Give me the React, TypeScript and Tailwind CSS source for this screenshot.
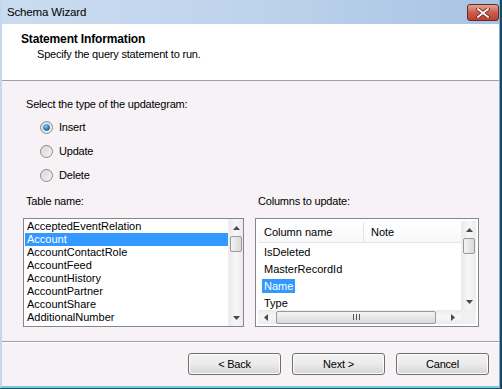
import React from "react";

const FONT = { fontFamily: '"Liberation Sans", Arial, sans-serif' };

function Arrow({ dir }: { dir: "up" | "down" | "left" | "right" }) {
  const pts =
    dir === "up"
      ? "0,4 7,4 3.5,0"
      : dir === "down"
      ? "0,0 7,0 3.5,4"
      : dir === "left"
      ? "4,0 4,7 0,3.5"
      : "0,0 0,7 4,3.5";
  const w = dir === "up" || dir === "down" ? 7 : 4;
  const h = dir === "up" || dir === "down" ? 4 : 7;
  return (
    <svg width={w} height={h} viewBox={`0 0 ${w} ${h}`}>
      <polygon points={pts} fill="#4a4a4a" />
    </svg>
  );
}

function VScroll() {
  return (
    <div className="w-[15px] h-full flex flex-col bg-gradient-to-r from-[#ebebeb] via-[#f7f7f7] to-[#ebebeb] border-l border-[#eeeeee]">
      <div className="h-[17px] flex items-center justify-center">
        <Arrow dir="up" />
      </div>
      <div className="h-[16px] mx-[1px] rounded-[2px] border border-[#9a9a9a] bg-gradient-to-r from-[#f4f4f4] to-[#d9d9d9]" />
      <div className="flex-1" />
      <div className="h-[17px] flex items-center justify-center">
        <Arrow dir="down" />
      </div>
    </div>
  );
}

function Radio({ checked }: { checked?: boolean }) {
  return (
    <svg width="13" height="13" viewBox="0 0 13 13">
      <defs>
        <linearGradient id={checked ? "rg1" : "rg0"} x1="0" y1="0" x2="1" y2="1">
          <stop offset="0" stopColor="#d2d2d2" />
          <stop offset="1" stopColor="#f8f8f8" />
        </linearGradient>
        <radialGradient id="dot" cx="0.4" cy="0.35" r="0.7">
          <stop offset="0" stopColor="#8fd3f5" />
          <stop offset="0.5" stopColor="#2f8fd0" />
          <stop offset="1" stopColor="#0b4f8f" />
        </radialGradient>
      </defs>
      <circle cx="6.5" cy="6.5" r="6" fill={`url(#${checked ? "rg1" : "rg0"})`} stroke="#8c8c8c" strokeWidth="1" />
      <circle cx="6.5" cy="6.5" r="4.3" fill="none" stroke="#e6e6e6" strokeWidth="0.8" />
      {checked && <circle cx="6.5" cy="6.5" r="3.3" fill="url(#dot)" />}
    </svg>
  );
}

function Btn({ children }: { children: React.ReactNode }) {
  return (
    <div className="w-[93px] h-[22px] rounded-[3px] border border-[#707070] bg-gradient-to-b from-[#f2f2f2] via-[#ebebeb] to-[#d6d6d6] flex items-center justify-center text-[11px] tracking-[-0.2px] text-black shadow-[inset_0_0_0_1px_#fcfcfc]">
      {children}
    </div>
  );
}

export default function App() {
  const tables = [
    "AcceptedEventRelation",
    "Account",
    "AccountContactRole",
    "AccountFeed",
    "AccountHistory",
    "AccountPartner",
    "AccountShare",
    "AdditionalNumber",
  ];
  const cols = ["IsDeleted", "MasterRecordId", "Name", "Type"];
  return (
    <div
      style={FONT}
      className="w-[502px] h-[389px] flex flex-col overflow-hidden border-r-2 border-r-[#1f4760] border-b border-b-[#2b5066] text-black"
    >
      <div className="flex-1 flex flex-col min-h-0 border-l-2 border-l-[#c3d8ee] border-r border-r-[#6fb2da] border-b-2 border-b-[#79c9e6]">
        {/* Title bar */}
        <div className="h-[24px] shrink-0 flex items-center pt-[2px] pl-[5px] pr-[1px] bg-gradient-to-r from-[#cadcf0] via-[#bed3ec] to-[#a9c3e4] relative">
          <span className="text-[11.5px] tracking-[-0.15px] text-black">Schema Wizard</span>
          <div className="absolute right-[0px] top-[4px] w-[32px] h-[17px] rounded-[3px] border border-[#6a2a22] bg-gradient-to-b from-[#e4a393] via-[#cc5d4b] to-[#b8402f] flex items-center justify-center">
            <svg width="14" height="10" viewBox="0 0 14 10">
              <path d="M2 1 L12 9 M12 1 L2 9" stroke="#5a1e16" strokeWidth="3.4" strokeLinecap="square" />
              <path d="M2 1 L12 9 M12 1 L2 9" stroke="#ffffff" strokeWidth="1.8" strokeLinecap="square" />
            </svg>
          </div>
        </div>

        {/* Header */}
        <div className="h-[57px] shrink-0 bg-white border-b border-[#a0a0a0] pt-[8px]">
          <div className="pl-[19px] text-[12px] leading-[14px] font-bold tracking-[-0.15px]">Statement Information</div>
          <div className="pl-[35px] mt-[2px] text-[11px] leading-[13px] tracking-[-0.2px]">
            Specify the query statement to run.
          </div>
        </div>

        {/* Body */}
        <div className="h-[261px] shrink-0 bg-[#f6f2f5] border-b border-[#a0a0a0] pl-[21px] pt-[17px] flex flex-col">
          <div className="pl-[3px] text-[11px] leading-[13px] tracking-[-0.2px]">Select the type of the updategram:</div>
          <div className="mt-[4px] pl-[17px] flex flex-col">
            {["Insert", "Update", "Delete"].map((l, i) => (
              <div key={l} className="h-[24px] flex items-center gap-[6px]">
                <Radio checked={i === 0} />
                <span className="text-[11px] leading-[13px] tracking-[-0.2px]">{l}</span>
              </div>
            ))}
          </div>
          <div className="mt-[8px] flex gap-[11px]">
            {/* Table list */}
            <div className="w-[221px] flex flex-col">
              <div className="pl-[3px] text-[11px] leading-[13px] tracking-[-0.2px]">Table name:</div>
              <div className="mt-[10px] h-[109px] border border-[#828790] bg-white flex">
                <div className="flex-1 pt-[1px] pl-[1px] overflow-hidden">
                  {tables.map((t, i) => (
                    <div
                      key={t}
                      className={`h-[13px] leading-[13px] pl-[2px] text-[11px] whitespace-nowrap ${
                        i === 1 ? "bg-[#3399ff] text-white" : ""
                      }`}
                    >
                      {t}
                    </div>
                  ))}
                </div>
                <VScroll />
              </div>
            </div>
            {/* Columns list */}
            <div className="w-[224px] flex flex-col">
              <div className="pl-[3px] text-[11px] leading-[13px] tracking-[-0.2px]">Columns to update:</div>
              <div className="mt-[10px] h-[109px] border border-[#828790] bg-white p-[2px] flex flex-col">
                <div className="flex-1 flex min-h-0">
                  <div className="flex-1 flex flex-col overflow-hidden pt-[1px]">
                    <div className="h-[21px] shrink-0 flex border-b border-[#e5e5e5] bg-gradient-to-b from-white to-[#f7f8fa]">
                      <div className="w-[106px] pl-[6px] flex items-center border-r border-[#e5e5e5] text-[11px]">
                        Column name
                      </div>
                      <div className="flex-1 pl-[7px] flex items-center text-[11px]">Note</div>
                    </div>
                    <div className="flex-1 overflow-hidden">
                      {cols.map((c, i) => (
                        <div key={c} className="h-[17px] flex items-center pl-[4px]">
                          <span
                            className={`px-[2px] leading-[14px] text-[11px] ${
                              i === 2 ? "bg-[#3399ff] text-white" : ""
                            }`}
                          >
                            {c}
                          </span>
                        </div>
                      ))}
                    </div>
                  </div>
                  <VScroll />
                </div>
                <div className="h-[14px] shrink-0 flex">
                  <div className="flex-1 flex items-center bg-gradient-to-b from-[#ebebeb] via-[#f7f7f7] to-[#ebebeb]">
                    <div className="w-[16px] flex items-center justify-center">
                      <Arrow dir="left" />
                    </div>
                    <div className="ml-[2px] w-[160px] h-[13px] rounded-[2px] border border-[#9a9a9a] bg-gradient-to-b from-[#f4f4f4] to-[#d9d9d9] flex items-center justify-center">
                      <svg width="7" height="6" viewBox="0 0 7 6">
                        <path d="M0.5 0 V6 M3.5 0 V6 M6.5 0 V6" stroke="#555" strokeWidth="1" />
                      </svg>
                    </div>
                    <div className="flex-1" />
                    <div className="w-[16px] flex items-center justify-center">
                      <Arrow dir="right" />
                    </div>
                  </div>
                  <div className="w-[15px] bg-[#f0f0f0]" />
                </div>
              </div>
            </div>
          </div>
        </div>

        {/* Footer */}
        <div className="flex-1 bg-[#f6f2f5] border-t border-white pt-[10px] pr-[10px] flex justify-end gap-[11px]">
          <Btn>&lt; Back</Btn>
          <Btn>Next &gt;</Btn>
          <Btn>Cancel</Btn>
        </div>
      </div>
    </div>
  );
}
